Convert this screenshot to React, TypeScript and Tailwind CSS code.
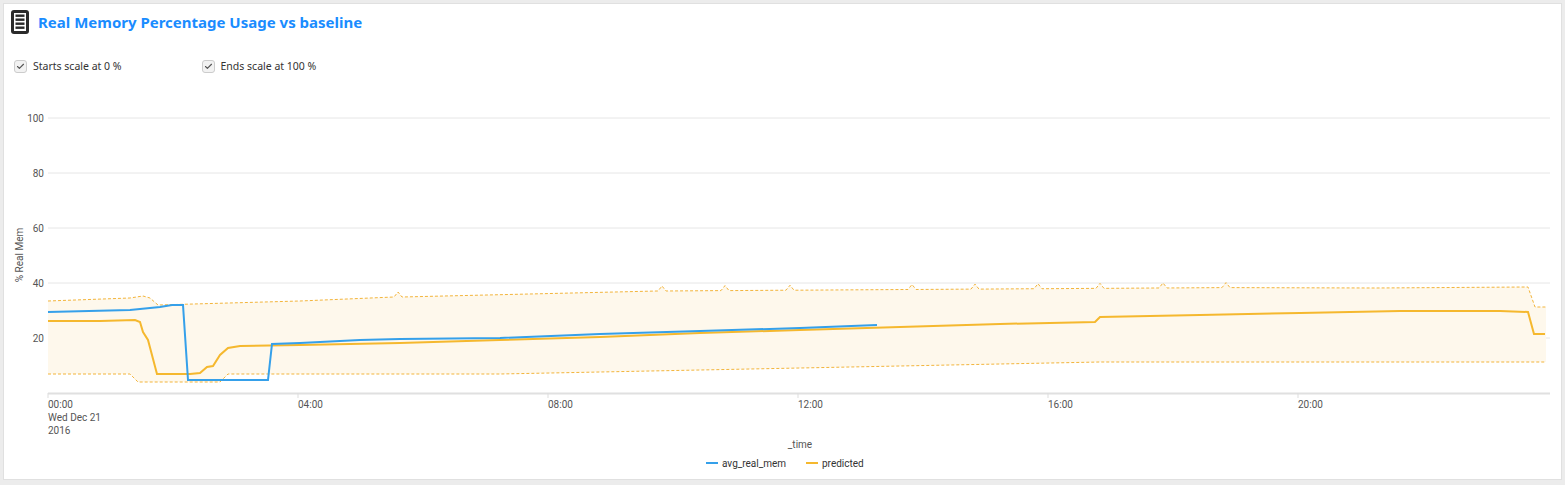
import { Check } from "lucide-react";

type Pt = [number, number];

const blue: Pt[] = [[48,312],[130,310],[160,307],[172,305],[183,305],[188,380],[268,380],[272,344],[300,343],[360,340],[400,339],[500,338],[600,334],[700,331],[800,328],[877,325]];
const predicted: Pt[] = [[48,321],[100,321],[135,320],[140,322],[143,332],[148,340],[157,374],[190,374],[200,373],[207,367],[213,366],[220,355],[228,348],[240,346],[300,345],[400,343],[500,340],[600,337],[700,333],[800,330],[900,327],[1000,324],[1095,322],[1100,317],[1200,315],[1300,313],[1400,311],[1500,311],[1528,312],[1534,334],[1545,334]];

// upper baseline with small hourly bumps
const upper: Pt[] = (() => {
  const pts: Pt[] = [[48,301],[130,298],[143,296],[150,298],[158,305],[300,301],[394,297],[398,292],[402,297]];
  const bumps = [662,725,790,912,975,1038,1100,1163,1226];
  let lastX = 402;
  for (const b of bumps) {
    const base = 291 - (b - 660) * 0.006;
    pts.push([b - 4, base], [b, base - 5], [b + 4, base]);
    lastX = b;
  }
  pts.push([lastX + 150, 288], [1528,287],[1535,307],[1546,307]);
  return pts;
})();
const lower: Pt[] = [[48,374],[130,374],[138,382],[220,382],[228,374],[500,374],[800,368],[1100,362],[1300,362],[1546,362]];

const line = (p: Pt[]) => p.map(([x, y], i) => `${i ? "L" : "M"}${x},${y}`).join(" ");
const area = line(upper) + " " + [...lower].reverse().map(([x, y]) => `L${x},${y}`).join(" ") + " Z";

const yTicks = [100, 80, 60, 40, 20];
const xTicks = ["00:00", "04:00", "08:00", "12:00", "16:00", "20:00"];

function Box({ label }: { label: string }) {
  return (
    <label className="flex items-center gap-1.5 text-[10.5px] text-[#333]">
      <span className="flex h-[13px] w-[13px] items-center justify-center rounded-[3px] border border-[#ccc] bg-[#f2f2f2]">
        <Check className="h-[9px] w-[9px] text-[#555]" strokeWidth={3} />
      </span>
      {label}
    </label>
  );
}

export default function App() {
  return (
    <div className="h-[485px] w-[1565px] bg-[#ececec] p-[3px] font-['Roboto',sans-serif]">
      <div className="relative flex h-[477px] flex-col border border-[#e0e0e0] bg-white">
        <div className="flex items-center gap-2 px-[6px] pt-[5px]">
          <svg width="20" height="26" viewBox="0 0 20 26">
            <rect x="1" y="1" width="18" height="24" rx="3" fill="#2b2b2b" />
            <rect x="4" y="4" width="12" height="18" fill="#fff" />
            {[5.5, 9.5, 13.5, 17.5].map((y) => (
              <rect key={y} x="5.5" y={y} width="9" height="2.4" fill="#2b2b2b" />
            ))}
          </svg>
          <h1 className="text-[15px] font-bold text-[#1a8cff]">Real Memory Percentage Usage vs baseline</h1>
        </div>
        <div className="mt-[24px] flex gap-[80px] pl-[10px]">
          <Box label="Starts scale at 0 %" />
          <Box label="Ends scale at 100 %" />
        </div>
        <svg className="absolute left-[-4px] top-[-4px]" width="1565" height="485" fontFamily="Roboto, sans-serif">
          {yTicks.map((v) => {
            const y = 393 - v * 2.75;
            return (
              <g key={v}>
                <line x1="48" x2="1550" y1={y} y2={y} stroke="#e6e6e6" />
                <text x="44" y={y + 3.5} fontSize="10" fill="#555" textAnchor="end">{v}</text>
              </g>
            );
          })}
          <path d={area} fill="#fef8ec" />
          <path d={line(upper)} fill="none" stroke="#f3b53c" strokeWidth="1" strokeDasharray="3 2" />
          <path d={line(lower)} fill="none" stroke="#f3b53c" strokeWidth="1" strokeDasharray="3 2" />
          <path d={line(predicted)} fill="none" stroke="#f5b82e" strokeWidth="2" />
          <path d={line(blue)} fill="none" stroke="#35a0ea" strokeWidth="2" />
          <line x1="48" x2="1550" y1="393.5" y2="393.5" stroke="#e0e0e0" strokeWidth="2" />
          {xTicks.map((t, i) => {
            const x = 48 + i * 250;
            return (
              <g key={t}>
                <line x1={x} x2={x} y1="393" y2="398" stroke="#ddd" />
                <text x={x} y="408" fontSize="10" fill="#555">{t}</text>
              </g>
            );
          })}
          <text x="48" y="421" fontSize="10" fill="#555">Wed Dec 21</text>
          <text x="48" y="434" fontSize="10" fill="#555">2016</text>
          <text x="800" y="448" fontSize="10" fill="#555" textAnchor="middle">_time</text>
          <text transform="translate(23,255) rotate(-90)" fontSize="10" fill="#555" textAnchor="middle">% Real Mem</text>
          <line x1="706" x2="718" y1="463" y2="463" stroke="#35a0ea" strokeWidth="2" />
          <text x="722" y="467" fontSize="10" fill="#333">avg_real_mem</text>
          <line x1="806" x2="818" y1="463" y2="463" stroke="#f5b82e" strokeWidth="2" />
          <text x="822" y="467" fontSize="10" fill="#333">predicted</text>
        </svg>
      </div>
    </div>
  );
}
